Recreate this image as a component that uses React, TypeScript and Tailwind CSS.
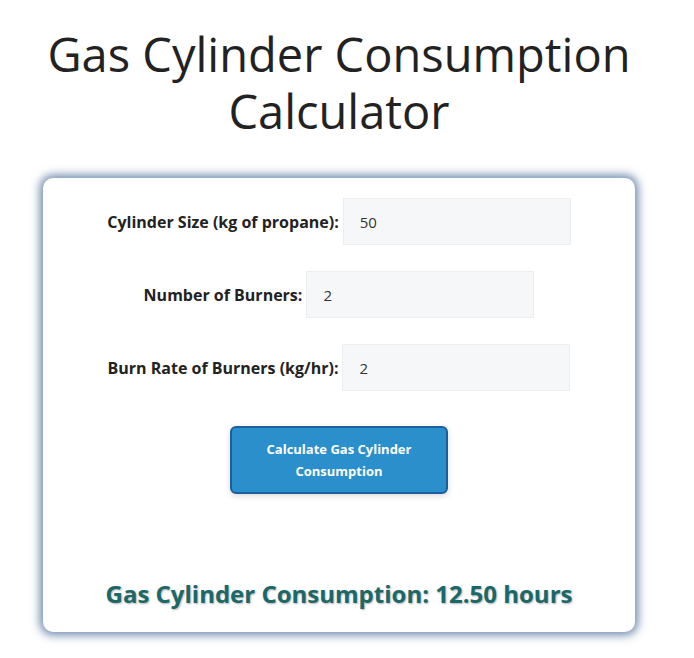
import React, { useState } from 'react'

const FONT = "font-['Open_Sans','Noto_Sans',sans-serif]"

interface FieldProps {
  label: string
  value: string
  onChange: (v: string) => void
}

function Field({ label, value, onChange }: FieldProps) {
  return (
    <div className="flex items-center justify-center gap-1">
      <label className="text-[16px] font-bold text-[#222]">{label}</label>
      <input
        type="text"
        value={value}
        onChange={(e) => onChange(e.target.value)}
        className="w-[228px] h-[47px] px-4 bg-[#f6f7f9] border border-[#eceef0] text-[15px] text-[#333] outline-none"
      />
    </div>
  )
}

export default function App() {
  const [size, setSize] = useState('50')
  const [burners, setBurners] = useState('2')
  const [rate, setRate] = useState('2')
  const [hours, setHours] = useState(12.5)

  const calculate = () => {
    const s = parseFloat(size)
    const b = parseFloat(burners)
    const r = parseFloat(rate)
    if (s > 0 && b > 0 && r > 0) setHours(s / (b * r))
  }

  return (
    <div className={`${FONT} w-[678px] min-h-[658px] bg-white pt-[26px]`}>
      <h1 className="text-center text-[47px] leading-[57px] font-normal text-[#222] px-8">
        Gas Cylinder Consumption Calculator
      </h1>

      <div className="mx-[43px] mt-[38px] h-[454px] bg-white rounded-[10px] shadow-[0_0_10px_3px_rgba(45,85,135,0.7)] flex flex-col items-center pt-[20px]">
        <div className="flex flex-col gap-[26px]">
          <Field label="Cylinder Size (kg of propane):" value={size} onChange={setSize} />
          <Field label="Number of Burners:" value={burners} onChange={setBurners} />
          <Field label="Burn Rate of Burners (kg/hr):" value={rate} onChange={setRate} />
        </div>

        <button
          onClick={calculate}
          className="mt-[35px] w-[218px] h-[68px] px-8 bg-[#2a8fca] border-2 border-[#1b5f9e] rounded-[6px] text-white text-[13px] font-bold leading-[22px] shadow-[0_2px_6px_rgba(0,0,0,0.15)]"
        >
          Calculate Gas Cylinder Consumption
        </button>

        <p className="mt-auto mb-[20px] text-[24px] font-bold text-[#1a6868] [text-shadow:1px_1px_2px_rgba(0,0,0,0.3)]">
          Gas Cylinder Consumption: {hours.toFixed(2)} hours
        </p>
      </div>
    </div>
  )
}
